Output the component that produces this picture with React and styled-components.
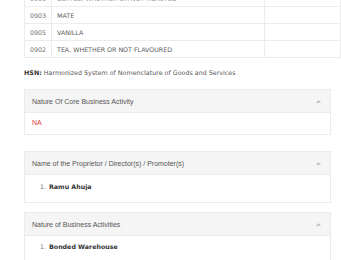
import React from 'react';
import styled, { createGlobalStyle } from 'styled-components';

const Global = createGlobalStyle`
  html, body {
    margin: 0;
    padding: 0;
    background: #ffffff;
    overflow: hidden;
  }
`;

const Page = styled.div`
  width: 341px;
  height: 260px;
  overflow: hidden;
  background: #ffffff;
`;

// page is scrolled a little, so the first table row is cut at the top
const Scroller = styled.div`
  margin-top: -11px;
  padding-left: 24px;
`;

const Table = styled.table`
  width: 317px;
  border-collapse: collapse;
  font-family: "DejaVu Sans", Verdana, sans-serif;
  font-size: 6.3px;
  color: #5a5a5a;

  td {
    height: 16px;
    padding: 0 5px;
    border: 1px solid #ececec;
    vertical-align: middle;
    white-space: nowrap;
  }

  tr:first-child td {
    color: #999;
  }

  td.code {
    width: 13px;
    color: #6a6a6a;
  }

  td.extra {
    width: 65px;
  }
`;

const Note = styled.p`
  margin: 11px 0 0;
  font-family: "DejaVu Sans", Verdana, sans-serif;
  font-size: 6.35px;
  color: #5a5a5a;

  b {
    color: #333;
  }
`;

const Card = styled.section`
  width: 305px;
  border: 1px solid #ebebeb;
  margin-top: ${(p) => p.$gap}px;
  background: #fff;
`;

const CardHead = styled.div`
  display: flex;
  align-items: center;
  justify-content: space-between;
  height: 22px;
  padding: 0 10px 0 7px;
  background: #f5f5f5;
  border-bottom: 1px solid #ebebeb;
  font-family: "Liberation Sans", Arial, sans-serif;
  font-size: 7px;
  color: #555;
`;

const Chevron = styled.span`
  width: 2px;
  height: 2px;
  border-left: 1px solid #aaa;
  border-top: 1px solid #aaa;
  transform: rotate(45deg);
  margin-top: 2px;
`;

const CardBody = styled.div`
  padding: ${(p) => p.$pad};
  font-family: "DejaVu Sans", Verdana, sans-serif;
  font-size: 6.3px;
  color: #444;
`;

const Missing = styled.span`
  color: #e0443a;
  font-family: "Liberation Sans", Arial, sans-serif;
  font-size: 7px;
`;

const List = styled.ol`
  margin: 0;
  padding-left: 23px;
  color: #777;

  li {
    padding-left: 1px;
  }

  strong {
    color: #333;
    font-weight: bold;
  }
`;

const rows = [
  ['0901', 'COFFEE, WHETHER OR NOT ROASTED'],
  ['0903', 'MATE'],
  ['0905', 'VANILLA'],
  ['0902', 'TEA, WHETHER OR NOT FLAVOURED'],
];

function Panel({ title, gap, pad, children }) {
  return (
    <Card $gap={gap}>
      <CardHead>
        <span>{title}</span>
        <Chevron />
      </CardHead>
      <CardBody $pad={pad}>{children}</CardBody>
    </Card>
  );
}

export default function App() {
  return (
    <Page>
      <Global />
      <Scroller>
        <Table>
          <tbody>
            {rows.map(([code, name]) => (
              <tr key={code}>
                <td className="code">{code}</td>
                <td>{name}</td>
                <td className="extra"></td>
              </tr>
            ))}
          </tbody>
        </Table>
        <Note>
          <b>HSN:</b> Harmonized System of Nomenclature of Goods and Services
        </Note>
        <Panel title="Nature Of Core Business Activity" gap={13} pad="6px 7px 8px">
          <Missing>NA</Missing>
        </Panel>
        <Panel title="Name of the Proprietor / Director(s) / Promoter(s)" gap={16} pad="8px 0 12px">
          <List>
            <li><strong>Ramu Ahuja</strong></li>
          </List>
        </Panel>
        <Panel title="Nature of Business Activities" gap={9} pad="7px 0 10px">
          <List>
            <li><strong>Bonded Warehouse</strong></li>
          </List>
        </Panel>
      </Scroller>
    </Page>
  );
}
